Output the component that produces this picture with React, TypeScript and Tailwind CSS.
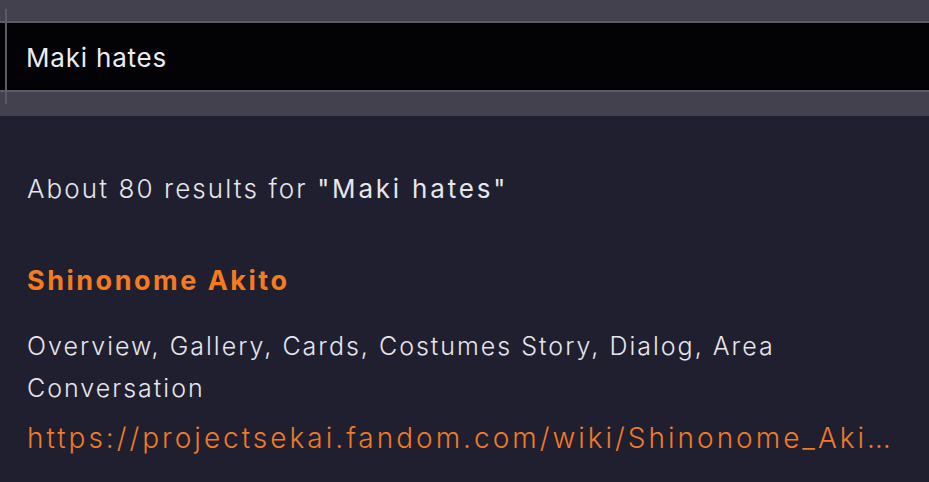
export default function App() {
  const body = { fontFamily: "Inter, 'Open Sans', sans-serif" };

  return (
    <div className="min-h-[482px] w-[929px] overflow-hidden bg-[#201f2f]" style={body}>
      {/* search bar */}
      <div className="relative h-[116px] bg-[#42414d] pt-[21px]">
        <div className="flex h-[71px] items-center border-y-2 border-[#5b5b66] bg-[#030205] pl-[26px]">
          <span className="pt-[2px] text-[26px] tracking-[0.8px] text-[#ececf0]">Maki hates</span>
        </div>
        <span className="absolute left-[5px] top-[9px] h-[95px] w-[2px] bg-[#5b5b66]" />
      </div>

      <div className="px-[27px] pt-[53px]">
        <p className="text-[26px] font-light tracking-[2.1px] text-[#e6e6ec]">
          About 80 results for <span className="font-normal tracking-[2.8px]">"Maki hates"</span>
        </p>

        <h2 className="mt-[53px] text-[27px] font-bold tracking-[2.5px] text-[#f47b20]">Shinonome Akito</h2>

        <p className="mt-[23px] w-[800px] text-[25px] font-light leading-[42px] tracking-[2px] text-[#e6e6ec]">
          Overview, Gallery, Cards, Costumes Story, Dialog, Area Conversation
        </p>
        <p className="mt-[8px] w-[864px] truncate text-[28px] font-light leading-[42px] tracking-[3px] text-[#f07a25]">
          https://projectsekai.fandom.com/wiki/Shinonome_Akito
        </p>
      </div>
    </div>
  );
}
